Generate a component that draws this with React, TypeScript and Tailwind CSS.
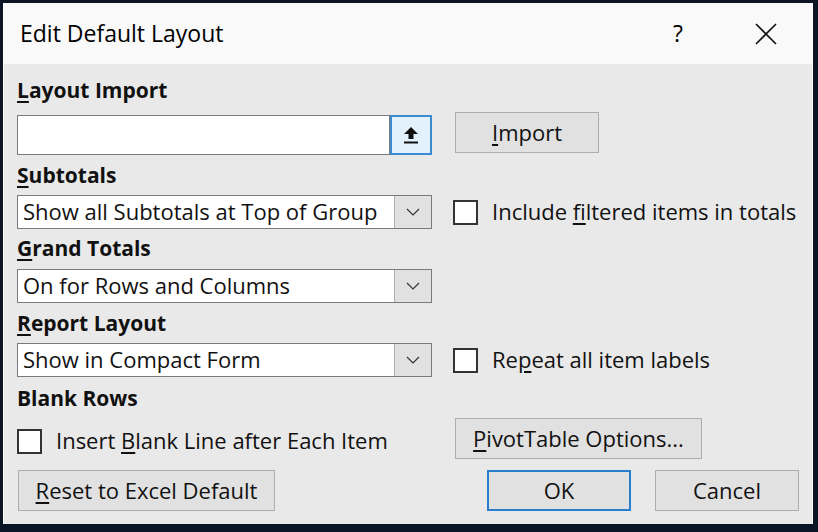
import React from "react";

const font = { fontFamily: '"Open Sans", "Noto Sans", sans-serif' };

// underlined access-key letter
const Mn = ({ children }: { children: React.ReactNode }) => (
  <span className="underline decoration-[1.5px] underline-offset-[3px]">{children}</span>
);

const Chevron = () => (
  <svg width="14" height="8" viewBox="0 0 14 8" fill="none">
    <path d="M1 1 L7 7 L13 1" stroke="#333" strokeWidth="1.2" />
  </svg>
);

const Select = ({ value }: { value: string }) => (
  <div className="flex h-[34px] w-[415px] border border-[#7a7a7a] bg-white">
    <div className="flex flex-1 items-center pb-[2px] pl-[5px] text-[22px] leading-[28px] text-[#111]">{value}</div>
    <div className="flex w-[37px] items-center justify-center border-l border-[#adadad] bg-[#e1e1e1]">
      <Chevron />
    </div>
  </div>
);

const Checkbox = () => <div className="h-[25px] w-[25px] shrink-0 border-2 border-[#333] bg-white" />;

const Label = ({ children, className = "" }: { children: React.ReactNode; className?: string }) => (
  <div className={`flex h-[36px] items-center text-[21px] font-bold text-[#111] ${className}`}>{children}</div>
);

const Check = ({ children, className = "" }: { children: React.ReactNode; className?: string }) => (
  <div className={`flex h-[25px] items-center ${className}`}>
    <Checkbox />
    <span className="ml-[14px] pb-[2px] text-[22px] leading-[23px] text-[#111]">{children}</span>
  </div>
);

const Button = ({
  children,
  className = "",
  primary,
}: {
  children: React.ReactNode;
  className?: string;
  primary?: boolean;
}) => (
  <button
    className={`flex h-[41px] items-center justify-center bg-[#e1e1e1] pb-[2px] text-[22px] leading-[28px] text-[#111] ${
      primary ? "border-2 border-[#2a7ed0]" : "border border-[#adadad]"
    } ${className}`}
  >
    {children}
  </button>
);

export default function App() {
  return (
    <div className="h-[532px] w-[818px] bg-[#0b1525] pb-[8px] pl-[3px] pr-[5px] pt-[3px]" style={font}>
      <div className="flex h-full flex-col border-l border-r border-white bg-[#e9e9e9]">
        {/* --- Title bar --- */}
        <div className="flex h-[61px] shrink-0 items-center bg-[#f9f9f9] pl-[16px]">
          <div className="flex-1 text-[23px] text-black">Edit Default Layout</div>
          <div className="mr-[72px] text-[23px] text-black">?</div>
          <svg width="22" height="22" viewBox="0 0 22 22" className="mr-[35px]">
            <path d="M1 1 L21 21 M21 1 L1 21" stroke="#111" strokeWidth="1.6" />
          </svg>
        </div>

        {/* --- Body --- */}
        <div className="flex flex-col pl-[13px]">
          <Label className="mt-[9px]">
            <Mn>L</Mn>ayout Import
          </Label>
          <div className="mt-[3px] flex h-[43px] items-start">
            <div className="mt-[3px] flex h-[40px] w-[415px]">
              <div className="flex-1 border border-[#7a7a7a] bg-white" />
              <div className="flex w-[42px] items-center justify-center border-2 border-[#3a8bd0] bg-[#e3f1fc]">
                <svg width="16" height="18" viewBox="0 0 16 18">
                  <path d="M8 1 L15 8 L10.5 8 L10.5 13 L5.5 13 L5.5 8 L1 8 Z" fill="#111" />
                  <rect x="1" y="15.5" width="14" height="2" fill="#111" />
                </svg>
              </div>
            </div>
            <Button className="ml-[23px] w-[144px]">
              <Mn>I</Mn>mport
            </Button>
          </div>

          <Label className="mt-[3px]">
            <Mn>S</Mn>ubtotals
          </Label>
          <div className="mt-[1px] flex h-[34px] items-center">
            <Select value="Show all Subtotals at Top of Group" />
            <Check className="ml-[21px]">
              Include <Mn>f</Mn>iltered items in totals
            </Check>
          </div>

          <Label className="mt-[2px]">
            <Mn>G</Mn>rand Totals
          </Label>
          <div className="mt-[2px] flex h-[34px]">
            <Select value="On for Rows and Columns" />
          </div>

          <Label className="mt-[3px]">
            <Mn>R</Mn>eport Layout
          </Label>
          <div className="mt-[1px] flex h-[34px] items-center">
            <Select value="Show in Compact Form" />
            <Check className="ml-[21px]">
              Re<Mn>p</Mn>eat all item labels
            </Check>
          </div>

          <Label className="mt-[4px]">Blank Rows</Label>
          <div className="mt-[1px] flex h-[41px] items-start">
            <Check className="mt-[11px] w-[415px]">
              Insert <Mn>B</Mn>lank Line after Each Item
            </Check>
            <Button className="ml-[23px] w-[247px]">
              <Mn>P</Mn>ivotTable Options...
            </Button>
          </div>

          <div className="mt-[11px] flex">
            <Button className="ml-[1px] w-[257px]">
              <Mn>R</Mn>eset to Excel Default
            </Button>
            <Button primary className="ml-[212px] w-[144px]">
              OK
            </Button>
            <Button className="ml-[24px] w-[144px]">Cancel</Button>
          </div>
        </div>
      </div>
    </div>
  );
}
